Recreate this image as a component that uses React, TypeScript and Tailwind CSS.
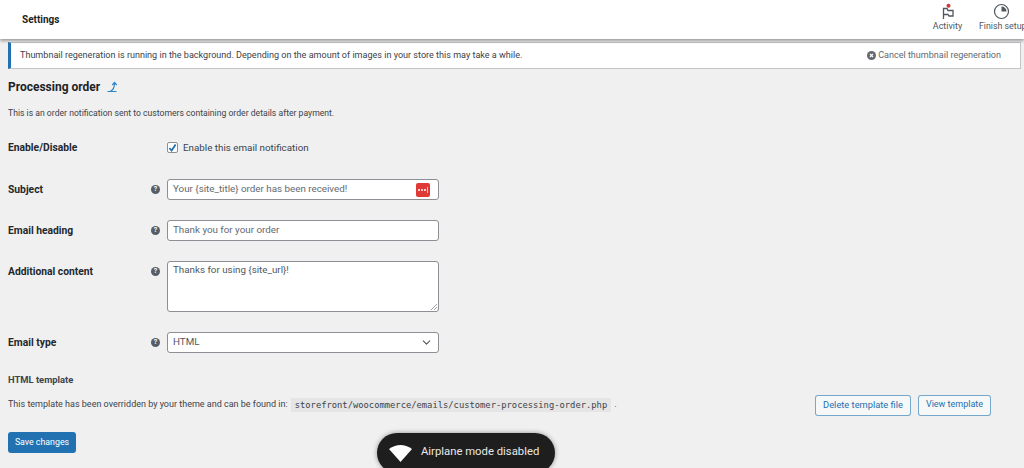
import React from "react";
import { ChevronDown } from "lucide-react";

const Help = () => (
  <span className="w-[9px] h-[9px] rounded-full bg-[#555d66] text-white text-[7px] leading-[9px] font-bold text-center shrink-0">?</span>
);

function Row({ label, help = true, h, children }: { label: string; help?: boolean; h: string; children: React.ReactNode }) {
  return (
    <div className={`flex ${h}`}>
      <div className="w-[143px] pt-[4px] text-[10.300px] leading-[14px] font-bold text-[#23282d]">{label}</div>
      <div className="w-[16px] pt-[6px] flex items-start">{help && <Help />}</div>
      {children}
    </div>
  );
}

const field = "w-[272px] bg-white border border-[#8c8f94] rounded-[3px] px-[5px] text-[9.800px] text-[#50575e] flex items-center";

export default function App() {
  return (
    <div className="w-[1024px] h-[468px] overflow-hidden bg-[#f0f0f1] relative text-[#3c434a]" style={{ fontFamily: 'Roboto, sans-serif' }}>
      <header className="h-[39px] bg-white flex items-center justify-between shadow-[0_2px_3px_rgba(0,0,0,0.35)] relative overflow-x-clip">
        <div className="pl-[22px] text-[10px] font-bold text-[#1e1e1e]">Settings</div>
        <div className="self-start flex items-start pt-[3px] w-[91px] shrink-0">
          <div className="flex flex-col items-center w-[29px] shrink-0">
            <svg width="16" height="17" viewBox="0 0 16 17" fill="none" className="text-[#50575e]">
              <path d="M3.500 16V5.500H7L8 7.500H13V13H9L8 11.500H4" stroke="currentColor" strokeWidth="1.300" />
              <circle cx="8.500" cy="2.800" r="2" fill="#d63638" />
            </svg>
            <span className="text-[9px] leading-[12px] text-[#50575e] whitespace-nowrap">Activity</span>
          </div>
          <div className="ml-[17px] flex flex-col items-center w-[45px] shrink-0">
            <svg width="17" height="17" viewBox="0 0 17 17" fill="none">
              <circle cx="8.500" cy="8.500" r="7" stroke="#50575e" strokeWidth="1.200" />
              <path d="M8.500 8.500V3.500A5 5 0 0 1 13.500 8.500Z" fill="#50575e" />
            </svg>
            <span className="self-start text-[8.800px] leading-[12px] text-[#50575e] whitespace-nowrap">Finish setup</span>
          </div>
        </div>
      </header>

      <main className="pl-[8px] pr-[3px]">
        <div className="mt-[3px] h-[27px] bg-white border border-[#c3c4c7] border-l-[3px] border-l-[#2271b1] flex items-center justify-between pl-[9px] pr-[19px] text-[9.050px] text-[#3c434a]">
          <span>Thumbnail regeneration is running in the background. Depending on the amount of images in your store this may take a while.</span>
          <span className="flex items-center gap-[2px] text-[#646970]">
            <svg width="9" height="9" viewBox="0 0 9 9"><circle cx="4.500" cy="4.500" r="4.500" fill="#646970" /><path d="M3 3L6 6M6 3L3 6" stroke="#fff" strokeWidth="1.200" /></svg>
            Cancel thumbnail regeneration
          </span>
        </div>

        <div className="mt-[9px] flex items-center h-[18px] text-[12px] font-bold text-[#1d2327]">
          Processing order
          <svg width="12" height="12" viewBox="0 0 12 12" fill="none" className="ml-[7px] text-[#2b86c5]" stroke="currentColor" strokeWidth="1.200">
            <path d="M0.500 10.500H9.500M3.500 10C6.500 9 7.500 6 7.500 2M5.300 4L7.500 1.500L9.700 4" />
          </svg>
        </div>
        <p className="mt-[10px] text-[8.650px] leading-[14px]">This is an order notification sent to customers containing order details after payment.</p>

        <div className="mt-[17px] flex flex-col">
          <Row label="Enable/Disable" help={false} h="h-[42px]">
            <div className="flex items-start gap-[5px] text-[9.800px] pt-[4px] leading-[14px]">
              <span className="w-[11px] h-[11px] mt-[1px] bg-white border border-[#8c8f94] rounded-[2px] flex items-center justify-center">
                <svg width="10" height="10" viewBox="0 0 10 10" fill="none" stroke="#2271b1" strokeWidth="2"><path d="M1.500 5L4 7.800L8.500 1" /></svg>
              </span>
              Enable this email notification
            </div>
          </Row>
          <Row label="Subject" h="h-[41px]">
            <div className={`${field} h-[21px] justify-between text-[#646970]`}>
              <span>Your {"{site_title}"} order has been received!</span>
              <span className="mr-[3px] w-[14px] h-[14px] bg-[#e03a37] rounded-[2px] flex items-center justify-center gap-[1px]">
                <i className="w-[2px] h-[2px] bg-white rounded-full" />
                <i className="w-[2px] h-[2px] bg-white rounded-full" />
                <i className="w-[2px] h-[2px] bg-white rounded-full" />
                <i className="w-[1px] h-[6px] bg-white/70" />
              </span>
            </div>
          </Row>
          <Row label="Email heading" h="h-[41px]">
            <div className={`${field} h-[21px] text-[#646970]`}>Thank you for your order</div>
          </Row>
          <Row label="Additional content" h="h-[71px]">
            <div className={`${field} h-[51px] !items-start pt-[1px] relative`}>
              Thanks for using {"{site_url}"}!
              <svg width="6" height="6" viewBox="0 0 6 6" className="absolute right-[1px] bottom-[1px]" stroke="#777" strokeWidth="0.700"><path d="M0 6L6 0M3 6L6 3" /></svg>
            </div>
          </Row>
          <Row label="Email type" h="h-[41px]">
            <div className={`${field} h-[21px] justify-between`}>
              HTML
              <ChevronDown size={13} className="text-[#50575e]" />
            </div>
          </Row>
        </div>

        <div className="text-[9.400px] leading-[14px] font-bold text-[#3c434a]">HTML template</div>
        <div className="mt-[7px] flex items-center h-[22px] pr-[30px] text-[9px]">
          <span>This template has been overridden by your theme and can be found in:</span>
          <code className="ml-[3px] px-[4px] h-[14px] leading-[14px] bg-[#e5e5e5] text-[8.800px] text-[#3c434a]" style={{ fontFamily: '"DejaVu Sans Mono", monospace' }}>storefront/woocommerce/emails/customer-processing-order.php</code>
          <span className="ml-[3px]">.</span>
          <div className="ml-auto flex gap-[7px]">
            <span className="w-[96px] h-[21px] flex items-center justify-center border border-[#2271b1]/60 rounded-[3px] bg-[#f6f7f7] text-[9.300px] text-[#2271b1]">Delete template file</span>
            <span className="w-[73px] h-[21px] flex items-center justify-center border border-[#2271b1]/60 rounded-[3px] bg-[#f6f7f7] text-[9px] text-[#2271b1]">View template</span>
          </div>
        </div>
        <div className="mt-[16px] w-[68px] h-[21px] bg-[#2271b1] rounded-[3px] text-white text-[8.800px] flex items-center justify-center">Save changes</div>
      </main>

      <div className="absolute left-[377px] top-[433px] w-[178px] h-[40px] rounded-[20px] bg-[#1e1e1e] shadow-[0_0_5px_rgba(0,0,0,0.4)] flex items-start pt-[11px] pl-[12px] gap-[9px] text-white text-[11.300px]">
        <svg width="23" height="18" viewBox="0 0 23 18"><path d="M0 5Q11.500 -3 23 5L11.500 18Z" fill="#fff" /></svg>
        <span className="leading-[16px] text-[#e8e8e8]">Airplane mode disabled</span>
      </div>
    </div>
  );
}
